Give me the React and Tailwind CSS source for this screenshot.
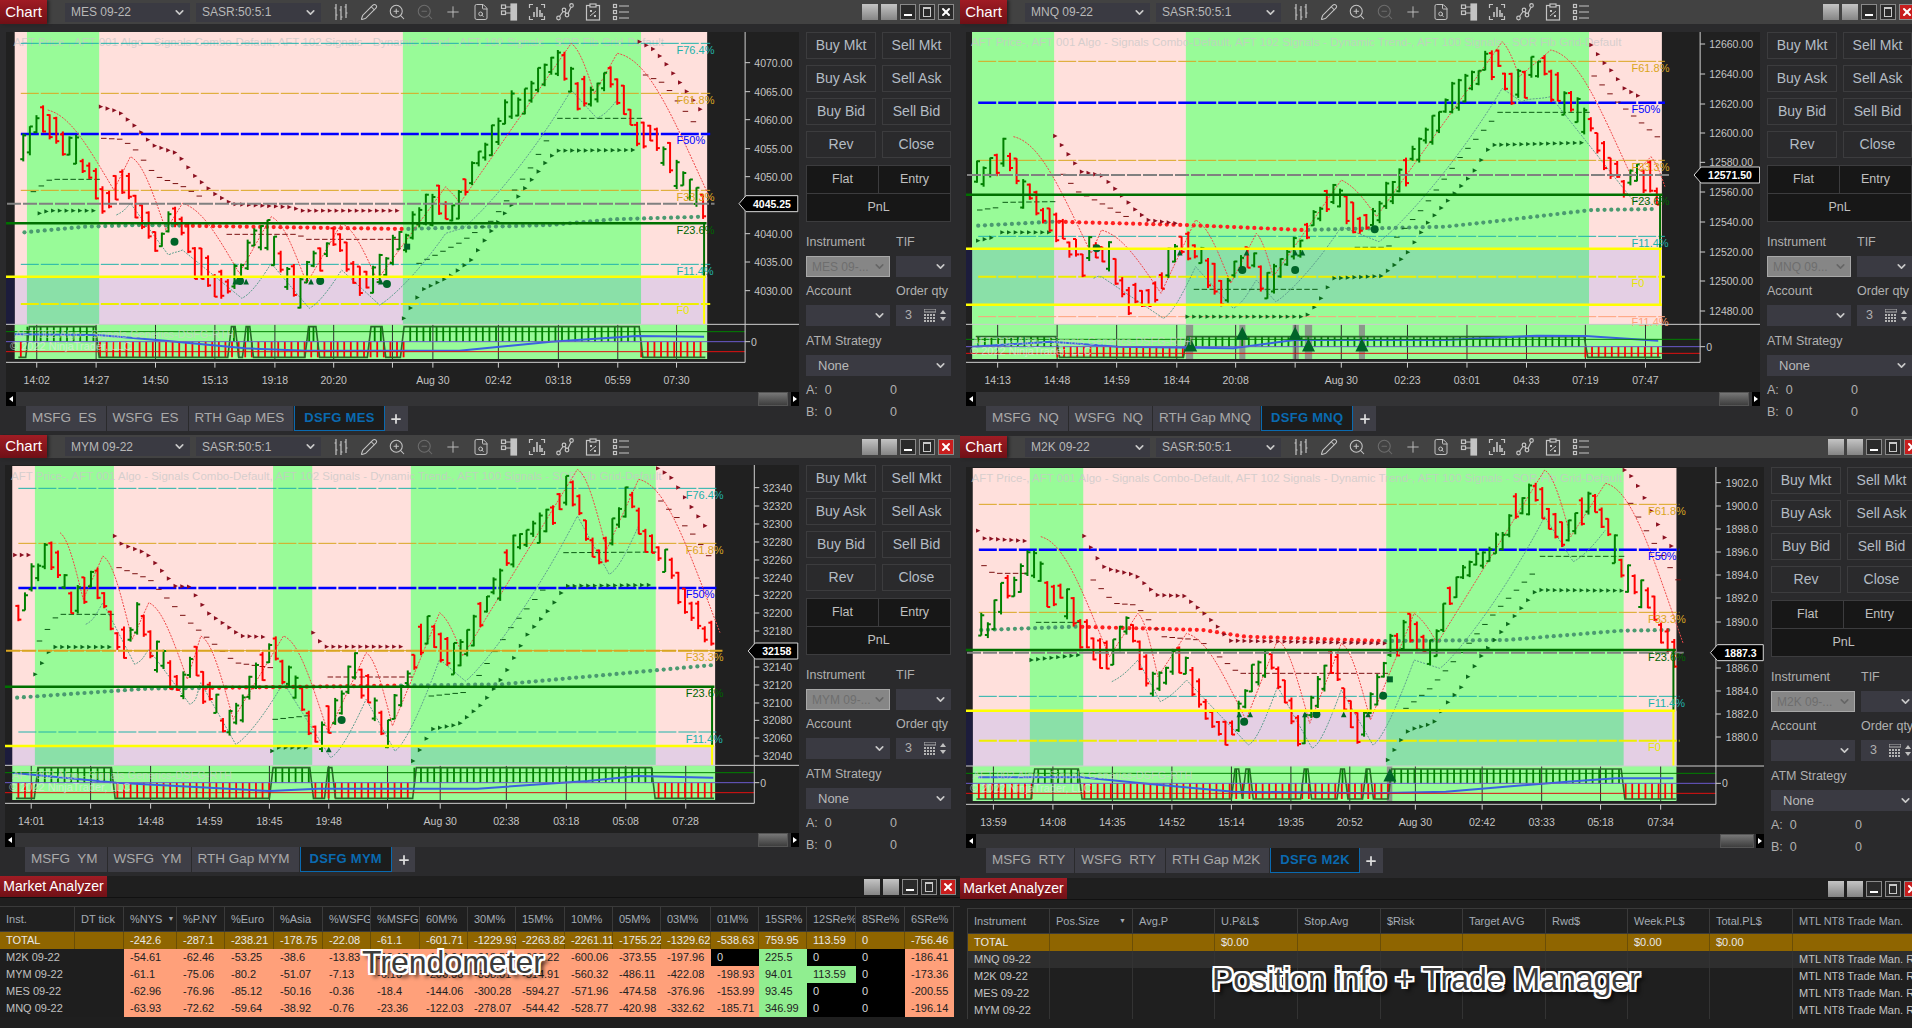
import React from 'react';
import { ChevronDown, ZoomIn, ZoomOut, Plus, Pencil, FileSearch, X } from 'lucide-react';

const CHARTS = {
  mes: {
    inst: 'MES 09-22', short: 'MES 09-...', cx: 0, cy: 0, sx: 1.6333, left: 6, top: 32, w: 793, h: 360,
    wrap: 'h-[434px]', title: 'h-6', gap: 'mt-2', btns: 'mr-[6px]', closeRed: false,
    tabs: ['MSFG  ES', 'WSFG  ES', 'RTH Gap MES', 'DSFG MES'],
    plot: [24, 1155, 95, 973, 1077], axis: 1217, green: [[44, 162], [658, 1047]], overlay: [830, 973],
    fibX: 1105,
    fibs: [[130, 't', 'F76.4%', 150], [280, 'o', 'F61.8%', 300], [402, 'b', 'F50%', 420], [571, 'o', 'F33.3%', 591], [793, 't', 'F11.4%', 813], [912, 'y', 'F0', 930]],
    gray: 611, dg: 670, yellow: 830, edge: 1150,
    prices: [['4070.00', 188], ['4065.00', 275], ['4060.00', 359], ['4055.00', 446], ['4050.00', 530], ['4040.00', 701], ['4035.00', 786], ['4030.00', 872]],
    priceX: 1232, marker: ['4045.25', 611, 1207, 1303],
    times: [[60, '14:02'], [157, '14:27'], [254, '14:50'], [351, '15:13'], [449, '19:18'], [545, '20:20'], [641, ''], [707, 'Aug 30'], [814, '02:42'], [912, '03:18'], [1009, '05:59'], [1105, '07:30']],
    path: [[38, 470], [70, 370], [100, 400], [125, 430], [150, 520], [180, 600], [205, 510], [240, 680], [265, 720], [290, 650], [320, 760], [350, 840], [385, 850], [410, 760], [435, 690], [465, 790], [495, 880], [520, 790], [550, 710], [580, 820], [610, 870], [640, 780], [665, 720], [690, 630], [720, 600], [745, 640], [775, 510], [810, 400], [850, 320], [890, 250], [925, 170], [945, 260], [965, 310], [1000, 200], [1025, 300], [1050, 400], [1090, 450], [1125, 540], [1155, 630]],
    upper: [[[165, 320], [195, 335], [225, 385], [250, 435], [290, 460], [320, 530], [350, 580], [380, 612], [480, 622], [490, 632], [650, 632]], [[1045, 125], [1070, 150], [1090, 195], [1110, 245], [1145, 330]]],
    lower: [[[65, 640], [80, 632], [155, 632]], [[660, 955], [690, 870], [735, 830], [770, 780], [800, 700], [825, 640], [860, 560], [895, 480], [910, 452], [1040, 450]]],
    redDash: [[[165, 415], [195, 418], [215, 445], [250, 528], [295, 560], [330, 598]], [[370, 703], [480, 703], [500, 718], [655, 718]], [[1050, 225], [1080, 250], [1130, 370]]],
    greenDash: [[[50, 575], [78, 538], [160, 538]], [[680, 790], [750, 725], [800, 660], [860, 510], [900, 385]], [[910, 355], [1045, 355]]],
    ma: [[40, 697], [140, 680], [230, 675], [400, 680], [660, 687], [900, 675], [1000, 658], [1150, 650]], maRed: [300, 660],
    circles: [[285, 725], [392, 843], [523, 843], [632, 852]], tris: [[384, 845], [402, 845], [508, 845], [622, 845]], square: [665, 740],
    sub: { lines: [995, 1025, 1055], top: 980, bot: 1072, greens: [[44, 158], [660, 1045]], spikes: [382, 405, 505, 512, 612, 622], blue: [[24, 1003], [160, 1005], [270, 1022], [400, 1045], [500, 1052], [750, 1052], [900, 1025], [1040, 1008], [1150, 1010]], zero: 1025, grid: [] },
    thumb: 'w-[30px] mr-[3px]', seed: 7,
  },
  mnq: {
    inst: 'MNQ 09-22', short: 'MNQ 09...', cx: 960, cy: 0, sx: 1.647, left: 966, top: 32, w: 794, h: 360,
    wrap: 'h-[436px]', title: 'h-6', gap: 'mt-2', btns: 'mr-[-3px]', closeRed: true,
    tabs: ['MSFG  NQ', 'WSFG  NQ', 'RTH Gap MNQ', 'DSFG MNQ'],
    plot: [20, 1156, 95, 973, 1077], axis: 1219, green: [[20, 155], [372, 1036]], overlay: [746, 914],
    fibX: 1106,
    fibs: [[184, 'o', 'F61.8%', 205], [308, 'b', 'F50%', 327], [481, 'o', 'F33.3%', 500], [709, 't', 'F11.4%', 730], [830, 'y', 'F0', 850], [950, 's', 'F11.4%', 966]],
    gray: 525, dg: 584, yellow: 746, yellow2: 914, edge: 1153,
    prices: [['12660.00', 132], ['12640.00', 222], ['12620.00', 312], ['12600.00', 399], ['12580.00', 487], ['12560.00', 576], ['12540.00', 666], ['12520.00', 756], ['12500.00', 843], ['12480.00', 933]],
    priceX: 1234, marker: ['12571.50', 525, 1209, 1317],
    times: [[62, '14:13'], [160, '14:48'], [258, '14:59'], [357, '18:44'], [454, '20:08'], [552, ''], [628, 'Aug 30'], [737, '02:23'], [835, '03:01'], [933, '04:33'], [1030, '07:19'], [1129, '07:47']],
    path: [[28, 530], [60, 490], [80, 450], [100, 540], [120, 600], [150, 640], [180, 720], [210, 790], [225, 730], [250, 770], [280, 880], [325, 910], [345, 800], [380, 700], [400, 770], [440, 880], [465, 780], [480, 740], [510, 860], [550, 780], [585, 680], [620, 580], [650, 640], [680, 680], [720, 570], [760, 450], [800, 340], [840, 260], [885, 165], [915, 260], [950, 220], [965, 190], [990, 280], [1030, 340], [1060, 440], [1100, 560], [1130, 510], [1155, 590]],
    upper: [[[157, 408], [200, 515], [235, 527], [290, 630], [310, 660], [365, 672]], [[1040, 135], [1060, 185], [1075, 215], [1095, 265], [1125, 295]]],
    lower: [[[30, 722], [55, 712]], [[70, 697], [150, 697]], [[375, 950], [570, 950], [590, 910], [615, 835], [695, 828], [735, 765], [770, 670], [810, 590], [845, 520], [875, 435], [1030, 428]]],
    redDash: [[[165, 523], [190, 575], [225, 607], [280, 660]], [[1040, 228], [1075, 300], [1150, 420]]],
    greenDash: [[[28, 630], [60, 622]], [[70, 607], [150, 605]], [[385, 868], [580, 868]], [[650, 742], [700, 742], [760, 620], [820, 470], [880, 345]], [[885, 337], [1035, 337]]],
    ma: [[30, 677], [155, 665], [370, 675], [565, 690], [800, 680], [900, 660], [1040, 630], [1150, 627]], maRed: [155, 565],
    circles: [[225, 745], [465, 810], [552, 810], [683, 688]], tris: [[362, 758], [472, 758], [552, 758], [564, 758]], square: null,
    sub: { lines: [1018, 1040, 1060], top: 1010, bot: 1072, greens: [[20, 158], [370, 1030]], spikes: [], blue: [[20, 1040], [150, 1025], [260, 1040], [450, 1045], [550, 1020], [800, 1020], [950, 1007], [1030, 1008], [1150, 1022]], zero: 1040, grid: [[372, 384], [460, 470], [548, 558], [568, 580], [657, 667]], big: [[380, 1035], [465, 1000], [552, 1000], [574, 1035], [662, 1035]] },
    thumb: 'w-[30px] mr-[3px]', seed: 19,
  },
  mym: {
    inst: 'MYM 09-22', short: 'MYM 09-...', cx: 0, cy: 436, sx: 1.6333, left: 5, top: 465, w: 794, h: 368,
    wrap: 'h-[442px]', title: 'h-[23px] mt-px', gap: 'mt-[7px]', btns: 'mr-[6px]', closeRed: true,
    tabs: ['MSFG  YM', 'WSFG  YM', 'RTH Gap MYM', 'DSFG MYM'],
    plot: [20, 1168, 90, 988, 1092], axis: 1232, green: [[57, 186], [446, 510], [671, 1071]], overlay: [930, 988],
    fibX: 1120,
    fibs: [[157, 't', 'F76.4%', 178], [322, 'o', 'F61.8%', 343], [456, 'b', 'F50%', 474], [644, 'o', 'F33.3%', 663], [888, 't', 'F11.4%', 910]],
    gray: 644, dg: 752, yellow: 930, edge: 1163,
    prices: [['32340', 155], ['32320', 210], ['32300', 264], ['32280', 318], ['32260', 372], ['32240', 426], ['32220', 478], ['32200', 531], ['32180', 585], ['32140', 693], ['32120', 747], ['32100', 801], ['32080', 853], ['32060', 906], ['32040', 960]],
    priceX: 1246, marker: ['32158', 645, 1222, 1303],
    times: [[51, '14:01'], [148, '14:13'], [246, '14:48'], [342, '14:59'], [440, '18:45'], [537, '19:48'], [633, ''], [719, 'Aug 30'], [827, '02:38'], [925, '03:18'], [1022, '05:08'], [1120, '07:28']],
    path: [[30, 560], [60, 430], [90, 330], [110, 420], [130, 520], [160, 400], [180, 530], [210, 640], [235, 540], [265, 670], [300, 760], [320, 640], [345, 780], [375, 880], [410, 770], [455, 640], [480, 740], [530, 920], [560, 800], [590, 690], [610, 790], [635, 900], [670, 720], [710, 570], [750, 690], [770, 590], [800, 500], [830, 400], [860, 290], [900, 240], [935, 140], [950, 220], [985, 370], [1025, 190], [1035, 170], [1060, 300], [1100, 400], [1130, 500], [1170, 620]],
    upper: [[[25, 357], [50, 357]], [[188, 300], [200, 325], [240, 352], [275, 425], [285, 450], [310, 452], [340, 530], [395, 600], [435, 603]], [[512, 590], [530, 632], [665, 632]], [[1075, 97], [1095, 120], [1125, 200], [1160, 290]]],
    lower: [[[58, 715], [80, 648], [90, 633], [180, 633]], [[445, 945], [455, 935], [505, 935]], [[675, 975], [695, 915], [705, 880], [750, 865], [790, 800], [825, 715], [860, 600], [900, 515], [925, 450], [1065, 447]]],
    redDash: [[[190, 395], [240, 430], [300, 550], [380, 680], [445, 697]], [[535, 723], [670, 723]], [[1075, 195], [1130, 300], [1165, 390]]],
    greenDash: [[[60, 615], [90, 535], [185, 535]], [[445, 850], [505, 838]], [[700, 780], [760, 768], [830, 575], [890, 445]], [[920, 350], [1075, 348]]],
    ma: [[28, 785], [240, 758], [820, 745], [1000, 715], [1165, 687]], maRed: [330, 650],
    circles: [[558, 852]], tris: [[537, 940]], square: null,
    sub: { lines: [1010, 1040, 1070], top: 995, bot: 1087, greens: [[57, 186], [446, 510], [675, 1068]], spikes: [537], blue: [[20, 1010], [190, 1040], [440, 1065], [520, 1058], [780, 1058], [960, 1035], [1040, 1020], [1165, 1025]], zero: 1040, grid: [] },
    thumb: 'w-[30px] mr-[3px]', seed: 31,
  },
  m2k: {
    inst: 'M2K 09-22', short: 'M2K 09-...', cx: 960, cy: 440, sx: 1.647, left: 966, top: 467, w: 798, h: 367,
    wrap: 'h-[442px]', title: 'h-[22px]', gap: 'mt-[9px]', btns: 'mr-[-8px]', closeRed: true,
    tabs: ['MSFG  RTY', 'WSFG  RTY', 'RTH Gap M2K', 'DSFG M2K'],
    plot: [21, 1180, 84, 978, 1083], axis: 1245, green: [[115, 203], [702, 1093]], overlay: [812, 978],
    fibX: 1133,
    fibs: [[193, 'o', 'F61.8%', 214], [329, 'b', 'F50%', 349], [517, 'o', 'F33.3%', 538], [769, 't', 'F11.4%', 790], [902, 'y', 'F0', 922]],
    gray: 638, dg: 630, yellow: 812, edge: 1175,
    prices: [['1902.0', 128], ['1900.0', 198], ['1898.0', 267], ['1896.0', 336], ['1894.0', 405], ['1892.0', 474], ['1890.0', 546], ['1886.0', 684], ['1884.0', 753], ['1882.0', 822], ['1880.0', 891]],
    priceX: 1261, marker: ['1887.3', 638, 1236, 1323],
    times: [[55, '13:59'], [153, '14:08'], [251, '14:35'], [349, '14:52'], [447, '15:14'], [545, '19:35'], [642, '20:52'], [750, 'Aug 30'], [860, '02:42'], [958, '03:33'], [1055, '05:18'], [1154, '07:34']],
    path: [[35, 560], [60, 540], [75, 470], [105, 400], [125, 330], [145, 440], [175, 460], [200, 560], [240, 680], [260, 620], [285, 560], [320, 740], [350, 680], [365, 620], [400, 770], [430, 860], [465, 870], [490, 700], [515, 640], [550, 820], [570, 880], [600, 720], [620, 650], [650, 830], [670, 870], [700, 680], [740, 560], [780, 640], [810, 490], [850, 370], [890, 310], [925, 210], [955, 130], [975, 240], [1000, 320], [1030, 190], [1055, 170], [1085, 340], [1120, 440], [1150, 530], [1185, 640]],
    upper: [[[30, 272], [40, 295], [110, 303]], [[205, 288], [225, 350], [240, 385], [290, 405], [310, 440], [325, 465], [370, 468], [400, 515], [425, 560], [445, 602], [700, 610]], [[1095, 90], [1110, 115], [1130, 180], [1160, 290], [1175, 325]]],
    lower: [[[118, 660], [195, 645]], [[705, 960], [725, 905], [740, 870], [780, 850], [800, 795], [825, 745], [858, 650], [910, 537], [950, 450], [1090, 452]]],
    redDash: [[[35, 377], [50, 400], [110, 400]], [[215, 420], [250, 490], [285, 495], [330, 590], [390, 600], [455, 700], [700, 700]], [[1100, 190], [1130, 285], [1180, 425]]],
    greenDash: [[[125, 547], [190, 547]], [[730, 805], [770, 745], [820, 640], [880, 510], [950, 380]], [[955, 349], [1090, 349]]],
    ma: [[35, 570], [190, 560], [400, 570], [470, 590], [700, 603], [900, 600], [1090, 572], [1170, 570]], maRed: [200, 700],
    circles: [[468, 845], [587, 823], [697, 767]], tris: [[460, 823], [478, 823], [568, 823], [632, 823], [672, 823]], square: [708, 718],
    sub: { lines: [1000, 1030, 1060], top: 987, bot: 1077, greens: [[120, 200], [710, 1090]], spikes: [455, 475, 570, 630, 670], blue: [[30, 1012], [200, 1012], [300, 1030], [450, 1055], [680, 1060], [800, 1055], [1000, 1025], [1080, 1015], [1175, 1015]], zero: 1030, grid: [[703, 712]], big: [[708, 1005]] },
    thumb: 'w-[34px] mr-[2px]', seed: 43,
  },
};

const FIB_STYLE = {
  t: { line: '#20b2aa', text: '#20b2aa', width: 1 },
  o: { line: '#daa520', text: '#daa520', width: 1 },
  b: { line: '#0000ff', text: '#0000ff', width: 2.5 },
  y: { line: '#eeee00', text: '#e6e600', width: 2 },
  s: { line: '#ffa07a', text: '#ffa07a', width: 1 },
};

function interp(path, x) {
  if (x <= path[0][0]) return path[0][1];
  for (let i = 1; i < path.length; i++) {
    if (x <= path[i][0]) {
      const t = (x - path[i - 1][0]) / (path[i][0] - path[i - 1][0]);
      return path[i - 1][1] + t * (path[i][1] - path[i - 1][1]);
    }
  }
  return path[path.length - 1][1];
}

function rng(seed) {
  let s = seed;
  return () => {
    s = (s * 16807) % 2147483647;
    return (s % 1000) / 1000;
  };
}

// points every `step` zoom px along a set of polylines
function along(lines, step) {
  const out = [];
  lines.forEach((ln) => {
    for (let x = ln[0][0]; x <= ln[ln.length - 1][0]; x += step) out.push([x, interp(ln, x)]);
  });
  return out;
}

function swingCurves(path, X, Y) {
  const ext = [];
  path.forEach((p, i) => {
    if (i === 0 || i === path.length - 1) return;
    const a = path[i - 1][1];
    const b = path[i + 1][1];
    if (p[1] < a && p[1] < b) ext.push(['hi', p]);
    if (p[1] > a && p[1] > b) ext.push(['lo', p]);
  });
  ext.push(['lo', path[path.length - 1]]);
  let red = '';
  let teal = '';
  for (let i = 0; i < ext.length - 1; i++) {
    const [kind, a] = ext[i];
    const b = ext[i + 1][1];
    if (kind === 'hi') {
      const sx = X(a[0] + 8), sy = Y(a[1] - 40), ex = X(b[0] + 6), ey = Y(b[1] - 30);
      red += `${red ? 'L' : 'M'}${sx} ${sy} C${sx + (ex - sx) * 0.35} ${sy + 6},${sx + (ex - sx) * 0.6} ${sy + (ey - sy) * 0.45},${ex} ${ey} `;
    } else {
      const sx = X(a[0] + 10), sy = Y(a[1] + 45), ex = X(b[0] + 8), ey = Y(b[1] + 100);
      teal += `${teal ? 'L' : 'M'}${sx} ${sy} C${sx + 8} ${sy - 4},${sx + (ex - sx) * 0.55} ${sy + (ey - sy) * 0.4},${ex} ${ey} `;
    }
  }
  return { red, teal };
}

function PriceChart({ c }) {
  const X = (z) => c.cx + z / c.sx;
  const Y = (z) => c.cy + z / 3;
  const [x0, x1, top, mid, bot] = c.plot;
  const r = rng(c.seed);
  const step = 6.6 * c.sx;
  const bars = [];
  const start = c.path[0][0];
  const end = c.path[c.path.length - 1][0];
  for (let x = start; x <= end; x += step) {
    const y0 = interp(c.path, x);
    const y1 = interp(c.path, x + step);
    const flip = r() < 0.16;
    const up = flip ? y1 >= y0 : y1 < y0;
    const span = 42 + r() * 56;
    const centre = (y0 + y1) / 2 + (r() - 0.5) * 48;
    const hi = centre - span / 2;
    const lo = centre + span / 2;
    const o = up ? lo - r() * 10 : hi + r() * 10;
    const cl = up ? hi + r() * 10 : lo - r() * 10;
    bars.push({ x: X(x), o: Y(o), c: Y(cl), hi: Y(hi), lo: Y(lo), col: up ? '#008000' : '#ff0000' });
  }
  const curves = swingCurves(c.path, X, Y);
  const isGreen = (z) => c.sub.greens.some(([a, b]) => z >= a && z <= b);
  const subBars = [];
  for (let x = x0 + 10; x <= x1; x += step) subBars.push([x, isGreen(x)]);
  c.sub.spikes.forEach((x) => subBars.push([x, true]));
  let ribbon = '';
  let prev = null;
  for (let x = x0 + 6; x <= x1; x += 6) {
    const g = isGreen(x) || c.sub.spikes.some((s) => Math.abs(s - x) < 7);
    const y = g ? c.sub.top : c.sub.bot;
    ribbon += `${prev === null ? 'M' : 'L'}${X(x)} ${Y(y)} `;
    prev = y;
  }
  const left = c.left;
  const right = c.left + c.w;
  const pts = (arr) => arr.map(([a, b]) => `${X(a)},${Y(b)}`).join(' ');
  const tri = (x, y, s = 2.2) => `${x - s},${y - s} ${x + s},${y} ${x - s},${y + s}`;
  const up = (x, y, s) => `${x - s},${y + s} ${x},${y - s} ${x + s},${y + s}`;

  return (
    <svg width={c.w} height={c.h} viewBox={`${left} ${c.top} ${c.w} ${c.h}`} className="block shrink-0 bg-[#202020]">
      {/* session background */}
      <rect x={X(x0)} y={Y(top)} width={X(x1) - X(x0)} height={Y(mid) - Y(top)} fill="#ffe0dc" />
      {c.green.map(([a, b]) => (
        <rect key={a} x={X(a)} y={Y(top)} width={X(b) - X(a)} height={Y(mid) - Y(top)} fill="#98fb98" />
      ))}
      <rect x={X(x0)} y={Y(c.overlay[0])} width={X(x1) - X(x0)} height={Y(c.overlay[1]) - Y(c.overlay[0])} fill="#e4cfe4" />
      {c.green.map(([a, b]) => (
        <rect key={a} x={X(a)} y={Y(c.overlay[0])} width={X(b) - X(a)} height={Y(c.overlay[1]) - Y(c.overlay[0])} fill="#8ae0a8" />
      ))}
      <rect x={left} y={Y(c.overlay[0])} width={X(x0) - left} height={Y(c.overlay[1]) - Y(c.overlay[0])} fill="#1c1c3c" />
      <rect x={X(x0)} y={Y(mid)} width={X(x1) - X(x0)} height={Y(bot) - Y(mid)} fill="#98fb98" />

      <text x={X(x0 - 2)} y={Y(top + 42)} fontSize="11.5" fill="#c8c8c8" fillOpacity="0.75">AFT Price-,  AFT 001 Algo - Signals Combo-Default,  AFT 102 Signals - Dynamic Trend-,  AFT 100 Signals - SOR Fib Grid-Default</text>

      {/* fib levels */}
      {c.fibs.map(([y, k]) => (
        <line key={y} x1={X(x0 + 10)} x2={X(x1 + 5)} y1={Y(y)} y2={Y(y)} stroke={FIB_STYLE[k].line} strokeWidth={FIB_STYLE[k].width} strokeDasharray="18 2" />
      ))}

      {/* moving average dots */}
      {along([c.ma], 11 * c.sx / 1.6333).map(([x, y]) => (
        <circle key={x} cx={X(x)} cy={Y(y)} r="2.1" fill={x >= c.maRed[0] && x <= c.maRed[1] ? '#ff2020' : '#4a9a70'} />
      ))}

      {/* stop markers */}
      {along(c.upper, 11).map(([x, y]) => <polygon key={`u${x}`} points={tri(X(x), Y(y))} fill="#8b1020" />)}
      {along(c.lower, 11).map(([x, y]) => <polygon key={`l${x}`} points={tri(X(x), Y(y))} fill="#0c6a1c" />)}
      {along(c.redDash, 13).map(([x, y]) => <line key={`r${x}`} x1={X(x)} x2={X(x) + 5.5} y1={Y(y)} y2={Y(y)} stroke="#7a1010" strokeWidth="1" />)}
      {along(c.greenDash, 13).map(([x, y]) => <line key={`g${x}`} x1={X(x)} x2={X(x) + 5.5} y1={Y(y)} y2={Y(y)} stroke="#0a5a14" strokeWidth="1" />)}

      <path d={curves.teal} fill="none" stroke="#5f9f8f" strokeWidth="1" strokeDasharray="2 1.2" />
      <path d={curves.red} fill="none" stroke="#f04848" strokeWidth="1" strokeDasharray="2 1.2" />

      {/* ohlc bars */}
      {bars.map((b) => (
        <g key={b.x} stroke={b.col} strokeWidth="2" fill="none">
          <line x1={b.x} x2={b.x} y1={b.hi} y2={b.lo} />
          <line x1={b.x - 3} x2={b.x} y1={b.o} y2={b.o} />
          <line x1={b.x} x2={b.x + 3} y1={b.c} y2={b.c} />
        </g>
      ))}

      {c.circles.map(([x, y]) => <circle key={x} cx={X(x)} cy={Y(y)} r="4" fill="#006428" />)}
      {c.tris.map(([x, y]) => <polygon key={x} points={up(X(x), Y(y), 2.8)} fill="#006428" />)}
      {c.square && <rect x={X(c.square[0]) - 3} y={Y(c.square[1]) - 3} width="6" height="6" fill="#006428" />}

      {/* heavy levels */}
      <line x1={left + 1} x2={X(x1 + 12)} y1={Y(c.gray)} y2={Y(c.gray)} stroke={c === CHARTS.mym ? '#daa520' : '#808080'} strokeWidth="2" strokeDasharray="14 2" />
      <line x1={left} x2={X(c.edge + 4)} y1={Y(c.dg)} y2={Y(c.dg)} stroke="#007000" strokeWidth="2.5" />
      <line x1={X(c.edge)} x2={X(c.edge)} y1={Y(c.dg)} y2={Y(c.yellow)} stroke="#007000" strokeWidth="2" />
      <line x1={left} x2={X(c.edge + 3)} y1={Y(c.yellow)} y2={Y(c.yellow)} stroke="#ffff00" strokeWidth="2.5" />
      {c.yellow2 && <line x1={left} x2={X(c.edge + 3)} y1={Y(c.yellow2)} y2={Y(c.yellow2)} stroke="#ffff00" strokeWidth="2.5" />}
      <line x1={X(c.edge)} x2={X(c.edge)} y1={Y(c.yellow)} y2={Y(c.yellow2 || mid)} stroke="#ffff00" strokeWidth="2" />

      {c.fibs.map(([y, k, label, ly]) => (
        <text key={label + y} x={X(c.fibX)} y={Y(ly) + 4} fontSize="11" fill={FIB_STYLE[k].text}>{label}</text>
      ))}
      <text x={X(c.fibX)} y={Y(c.dg + 20) + 4} fontSize="11" fill="#006400">F23.6%</text>

      {/* indicator pane */}
      {c.sub.grid.map(([a, b]) => <rect key={a} x={X(a)} y={Y(mid)} width={X(b) - X(a)} height={Y(bot) - Y(mid)} fill="#8a9a8a" />)}
      {c.times.map(([x]) => <line key={x} x1={X(x)} x2={X(x)} y1={Y(mid)} y2={Y(bot)} stroke="#303030" strokeWidth="1" />)}
      {subBars.map(([x, g]) => (
        g
          ? <line key={x} x1={X(x)} x2={X(x)} y1={Y(c.sub.top)} y2={Y(c.sub.zero)} stroke="#008000" strokeWidth="1.8" />
          : <line key={x} x1={X(x)} x2={X(x)} y1={Y(c.sub.zero)} y2={Y(c.sub.bot)} stroke="#ff0000" strokeWidth="1.8" />
      ))}
      <path d={ribbon} fill="none" stroke="#2a6a2a" strokeWidth="1.6" />
      <polyline points={pts(c.sub.blue)} fill="none" stroke="#3a62e0" strokeWidth="2" />
      <line x1={left} x2={X(c.axis)} y1={Y(c.sub.lines[0])} y2={Y(c.sub.lines[0])} stroke="#008000" strokeWidth="1" />
      <line x1={left} x2={X(c.axis)} y1={Y(c.sub.lines[1])} y2={Y(c.sub.lines[1])} stroke="#6a5acd" strokeWidth="1" />
      <line x1={left} x2={X(c.axis)} y1={Y(c.sub.lines[2])} y2={Y(c.sub.lines[2])} stroke="#e01010" strokeWidth="1" />
      {(c.sub.big || []).map(([x, y]) => <polygon key={x} points={up(X(x), Y(y), 6.5)} fill="#006428" />)}
      <text x={X(x0)} y={Y(c.sub.lines[0] + 18)} fontSize="11" fill="#d0d0d0" fillOpacity="0.65">AFT 002 Algo - Signals Generics-DSFG-RTH</text>
      <text x={left + 4} y={Y(c.sub.lines[1] + 25)} fontSize="11" fill="#e8e8e8" fillOpacity="0.65">© 2022 NinjaTrader, LLC</text>

      {/* axes */}
      <line x1={left} x2={right} y1={Y(mid)} y2={Y(mid)} stroke="#cfcfcf" strokeWidth="1" />
      <line x1={left} x2={X(c.axis)} y1={Y(bot + 10)} y2={Y(bot + 10)} stroke="#cfcfcf" strokeWidth="1" />
      <line x1={X(c.axis)} x2={X(c.axis)} y1={c.top} y2={Y(bot + 10)} stroke="#cfcfcf" strokeWidth="1" />
      {c.prices.map(([label, y]) => (
        <g key={label}>
          <line x1={X(c.axis)} x2={X(c.axis) + 5} y1={Y(y)} y2={Y(y)} stroke="#cfcfcf" />
          <text x={X(c.priceX)} y={Y(y) + 4} fontSize="10.5" fill="#c4c4c4">{label}</text>
        </g>
      ))}
      <line x1={X(c.axis)} x2={X(c.axis) + 5} y1={Y(c.sub.zero)} y2={Y(c.sub.zero)} stroke="#cfcfcf" />
      <text x={X(c.axis) + 6} y={Y(c.sub.zero) + 4} fontSize="10.5" fill="#c4c4c4">0</text>
      {c.times.map(([x, t]) => (
        <g key={x}>
          <line x1={X(x)} x2={X(x)} y1={Y(bot + 10)} y2={Y(bot + 26)} stroke="#cfcfcf" />
          <text x={X(x)} y={Y(bot + 63) + 4} fontSize="10.5" fill="#c4c4c4" textAnchor="middle">{t}</text>
        </g>
      ))}
      <polygon
        points={`${X(c.marker[2])},${Y(c.marker[1])} ${X(c.marker[2]) + 7},${Y(c.marker[1]) - 8} ${X(c.marker[3])},${Y(c.marker[1]) - 8} ${X(c.marker[3])},${Y(c.marker[1]) + 8} ${X(c.marker[2]) + 7},${Y(c.marker[1]) + 8}`}
        fill="#000"
        stroke="#d8d8d8"
        strokeWidth="1"
      />
      <text x={X(c.marker[2]) + 14} y={Y(c.marker[1]) + 4} fontSize="10.5" fontWeight="700" fill="#fff">{c.marker[0]}</text>
    </svg>
  );
}

function BarsIcon() {
  return (
    <svg width="18" height="18" viewBox="0 0 18 18" fill="none" stroke="#c4c4c4" strokeWidth="1.2">
      <path d="M4 1v16M2.5 5H4M4 12h1.5M9 3v14M7.5 7H9M9 14h1.5M14 1v14M12.5 4H14M14 10h1.5" />
    </svg>
  );
}
function PanelIcon() {
  return (
    <svg width="18" height="18" viewBox="0 0 18 18" fill="none" stroke="#c4c4c4" strokeWidth="1.2">
      <rect x="1.5" y="2" width="4" height="3.5" />
      <rect x="1.5" y="8" width="4" height="3.5" />
      <path d="M5.5 4H11M5.5 10H11" />
      <rect x="11" y="1" width="5.5" height="16" fill="#c4c4c4" />
    </svg>
  );
}
function ChartFrameIcon() {
  return (
    <svg width="18" height="18" viewBox="0 0 18 18" fill="none" stroke="#c4c4c4" strokeWidth="1.2">
      <path d="M5 1.5H1.5V5M13 1.5h3.5V5M5 16.5H1.5V13M13 16.5h3.5V13" />
      <path d="M6 14V9M9 14V4M12 14V7M14 14v-4" strokeWidth="1.6" />
    </svg>
  );
}
function NodesIcon() {
  return (
    <svg width="18" height="18" viewBox="0 0 18 18" fill="none" stroke="#c4c4c4" strokeWidth="1.2">
      <circle cx="2.5" cy="15" r="1.8" />
      <circle cx="8" cy="7" r="1.8" />
      <circle cx="11" cy="12" r="1.8" />
      <circle cx="15.5" cy="2.5" r="1.8" />
      <path d="M3.5 13.5L7 8.5M9 8.7l1.2 1.7M12 10.4L15 4.2" />
    </svg>
  );
}
function ClipIcon() {
  return (
    <svg width="18" height="18" viewBox="0 0 18 18" fill="none" stroke="#c4c4c4" strokeWidth="1.2">
      <rect x="2.5" y="2.5" width="13" height="14.5" />
      <rect x="6" y="1" width="6" height="3" fill="#424242" />
      <path d="M6 7l2 2M8 7L6 9M10 12l2 2M12 12l-2 2M6 13l6-5" strokeWidth="1" />
    </svg>
  );
}
function ListIcon() {
  return (
    <svg width="18" height="18" viewBox="0 0 18 18" fill="none" stroke="#c4c4c4" strokeWidth="1.2">
      <rect x="1.5" y="1.5" width="3" height="3" />
      <rect x="1.5" y="7.5" width="3" height="3" />
      <rect x="1.5" y="13.5" width="3" height="3" />
      <path d="M7 3h10M7 9h10M7 15h10" />
    </svg>
  );
}

function CalcIcon() {
  return (
    <svg width="12" height="14" viewBox="0 0 12 14" fill="#b4b4b4">
      <rect x="0" y="0" width="12" height="3" fill="none" stroke="#b4b4b4" />
      <path d="M0 5h2v2H0zM3 5h2v2H3zM6 5h2v2H6zM9 5h2v2H9zM0 8h2v2H0zM3 8h2v2H3zM6 8h2v2H6zM9 8h2v2H9zM0 11h2v2H0zM3 11h2v2H3zM6 11h2v2H6zM9 11h2v2H9z" />
    </svg>
  );
}

function WinButtons({ red, className }) {
  return (
    <div className={`flex shrink-0 gap-[3px] ${className}`}>
      <span className="h-4 w-4 bg-gradient-to-b from-[#c4c4c4] to-[#858585]" />
      <span className="h-4 w-4 bg-gradient-to-b from-[#c4c4c4] to-[#858585]" />
      <span className="flex h-4 w-4 items-end justify-center border border-[#8a8a8a] bg-[#2a2a2a] pb-[3px]">
        <span className="h-[2px] w-2 bg-white" />
      </span>
      <span className="flex h-4 w-4 items-center justify-center border border-[#8a8a8a] bg-[#2a2a2a]">
        <span className="h-[10px] w-2 border border-[#c8c8c8] border-t-2" />
      </span>
      <span className={red ? 'flex h-4 w-4 items-center justify-center border border-[#8a8a8a] bg-[#c81e1e]' : 'flex h-4 w-4 items-center justify-center border border-[#8a8a8a] bg-[#2a2a2a]'}>
        <X size={12} strokeWidth={4} color="#fff" />
      </span>
    </div>
  );
}

function Select({ label, className }) {
  return (
    <div className={`flex items-center justify-between bg-[#3a3a42] text-[#b8b8b8] ${className}`}>
      <span>{label}</span>
      <ChevronDown size={13} strokeWidth={3} color="#c8c8c8" />
    </div>
  );
}

function TitleBar({ c }) {
  return (
    <div className={`flex shrink-0 items-center bg-[#424242] ${c.title}`}>
      <div className="flex h-full w-[47px] items-center justify-center bg-gradient-to-b from-[#a01c24] to-[#701016] text-[15px] text-white shadow-[2px_0_3px_#222]">Chart</div>
      <Select label={c.inst} className="ml-[18px] h-[19px] w-[125px] pl-[6px] pr-[4px] text-[12px]" />
      <Select label="SASR:50:5:1" className="ml-[6px] h-[19px] w-[125px] pl-[6px] pr-[4px] text-[12px]" />
      <div className="ml-[11px] flex items-center gap-[10px] text-[#c4c4c4]">
        <BarsIcon />
        <Pencil size={18} strokeWidth={1.4} />
        <ZoomIn size={18} strokeWidth={1.4} />
        <ZoomOut size={18} strokeWidth={1.4} color="#6c6c6c" />
        <Plus size={18} strokeWidth={1.2} />
        <FileSearch size={18} strokeWidth={1.3} />
        <PanelIcon />
        <ChartFrameIcon />
        <NodesIcon />
        <ClipIcon />
        <ListIcon />
      </div>
      <WinButtons red={c.closeRed} className={`ml-auto ${c.btns}`} />
    </div>
  );
}

function TradeBtn({ children }) {
  return <div className="flex h-[27px] items-center justify-center border border-[#3c3c3e] text-[14px] text-[#b4bcc4]">{children}</div>;
}

function OrderPanel({ c }) {
  return (
    <div className="w-[145px] shrink-0 text-[12.5px] text-[#b0b0b0]">
      <div className="grid grid-cols-[70px_69px] gap-x-[6px] gap-y-[6px]">
        {['Buy Mkt', 'Sell Mkt', 'Buy Ask', 'Sell Ask', 'Buy Bid', 'Sell Bid', 'Rev', 'Close'].map((t) => <TradeBtn key={t}>{t}</TradeBtn>)}
      </div>
      <div className="mt-[7px] border border-[#3c3c3e] bg-[#171717] text-[12.5px] text-[#c0c0c0]">
        <div className="flex h-[28px] border-b border-[#3c3c3e]">
          <div className="flex w-[72px] items-center justify-center border-r border-[#3c3c3e]">Flat</div>
          <div className="flex flex-1 items-center justify-center">Entry</div>
        </div>
        <div className="flex h-[27px] items-center justify-center">PnL</div>
      </div>
      <div className="mt-[13px] grid grid-cols-[84px_55px] gap-x-[6px]">
        <span className="leading-[15px]">Instrument</span>
        <span className="leading-[15px]">TIF</span>
        <div className="mt-[6px] flex h-[21px] items-center justify-between overflow-hidden whitespace-nowrap border border-[#a8a8a8] bg-[#868686] pl-[5px] pr-[3px] text-[12px] text-[#6e6e6e]">
          <span>{c.short}</span>
          <ChevronDown size={13} strokeWidth={3} color="#666" className="shrink-0" />
        </div>
        <Select className="mt-[6px] h-[21px] justify-end pr-[4px]" />
        <span className="mt-[7px] leading-[15px]">Account</span>
        <span className="mt-[7px] leading-[15px]">Order qty</span>
        <Select className="mt-[6px] h-[21px] justify-end pr-[4px]" />
        <div className="mt-[6px] flex h-[21px] items-center bg-[#3a3a42] pl-[9px] pr-[4px]">
          <span>3</span>
          <span className="ml-[12px]"><CalcIcon /></span>
          <span className="ml-[4px] flex flex-col gap-[3px]">
            <span className="h-0 w-0 border-x-[3px] border-b-[4px] border-x-transparent border-b-[#c0c0c0]" />
            <span className="h-0 w-0 border-x-[3px] border-t-[4px] border-x-transparent border-t-[#c0c0c0]" />
          </span>
        </div>
      </div>
      <div className="mt-[8px] leading-[15px]">ATM Strategy</div>
      <Select label="None" className="mt-[6px] h-[21px] pl-[12px] pr-[4px] text-[13px]" />
      <div className="mt-[7px] grid grid-cols-[84px_1fr] leading-[15px]">
        <span>A:&nbsp; 0</span>
        <span>0</span>
        <span className="mt-[7px]">B:&nbsp; 0</span>
        <span className="mt-[7px]">0</span>
      </div>
    </div>
  );
}

function ScrollBar({ c }) {
  return (
    <div className="flex h-[14px] items-stretch bg-[#333335]">
      <span className="flex w-[10px] items-center justify-center bg-black">
        <span className="h-0 w-0 border-y-[3px] border-r-[4px] border-y-transparent border-r-white" />
      </span>
      <span className={`ml-auto bg-gradient-to-b from-[#777] to-[#3e3e3e] border border-[#555] ${c.thumb}`} />
      <span className="flex w-[8px] items-center justify-center bg-black">
        <span className="h-0 w-0 border-y-[3px] border-l-[4px] border-y-transparent border-l-white" />
      </span>
    </div>
  );
}

function ChartTabs({ tabs }) {
  return (
    <div className="flex h-[25px] items-stretch pl-5 text-[13.5px] text-[#aaaaaa]">
      {tabs.slice(0, 3).map((t) => (
        <div key={t} className="mr-px flex items-center whitespace-pre bg-[#3e3e46] pl-[6px] pr-[9px]">{t}</div>
      ))}
      <div className="flex items-center border-x border-b border-[#0a6ab0] bg-[#1c1c1c] px-[9px] text-[13px] font-bold tracking-[0.3px] text-[#0a6ab0]">{tabs[3]}</div>
      <div className="flex w-[23px] items-center justify-center bg-[#3e3e46] text-white"><Plus size={14} strokeWidth={3} color="#ddd" /></div>
    </div>
  );
}

function ChartWindow({ id }) {
  const c = CHARTS[id];
  return (
    <div className={`flex flex-col overflow-hidden bg-[#2a2a2c] ${c.wrap}`}>
      <TitleBar c={c} />
      <div className={`flex ${c.gap}`}>
        <div className={`flex shrink-0 flex-col ${id === 'mym' ? 'ml-[5px]' : 'ml-[6px]'}`}>
          <PriceChart c={c} />
          <ScrollBar c={c} />
          <ChartTabs tabs={c.tabs} />
        </div>
        <div className="ml-[7px]">
          <OrderPanel c={c} />
        </div>
      </div>
    </div>
  );
}

const TREND_COLS = ['Inst.', 'DT tick', '%NYS', '%P.NY', '%Euro', '%Asia', '%WSFG', '%MSFG', '60M%', '30M%', '15M%', '10M%', '05M%', '03M%', '01M%', '15SR%', '12SRe%', '8SRe%', '6SRe%'];
const TREND_TOTAL = ['TOTAL', '', '-242.6', '-287.1', '-238.21', '-178.75', '-22.08', '-61.1', '-601.71', '-1229.93', '-2263.82', '-2261.11', '-1755.22', '-1329.62', '-538.63', '759.95', '113.59', '0', '-756.46'];
const TREND_ROWS = [
  ['M2K 09-22', '', '-54.61', '-62.46', '-53.25', '-38.6', '-13.83', '-13.17', '-129.24', '-313.57', '-608.22', '-600.06', '-373.55', '-197.96', '0', '225.5', '0', '0', '-186.41'],
  ['MYM 09-22', '', '-61.1', '-75.06', '-80.2', '-51.07', '-7.13', '-6.18', '-206.38', '-338.01', '-514.91', '-560.32', '-486.11', '-422.08', '-198.93', '94.01', '113.59', '0', '-173.36'],
  ['MES 09-22', '', '-62.96', '-76.96', '-85.12', '-50.16', '-0.36', '-18.4', '-144.06', '-300.28', '-594.27', '-571.96', '-474.58', '-376.96', '-153.99', '93.45', '0', '0', '-200.55'],
  ['MNQ 09-22', '', '-63.93', '-72.62', '-59.64', '-38.92', '-0.76', '-23.36', '-122.03', '-278.07', '-544.42', '-528.77', '-420.98', '-332.62', '-185.71', '346.99', '0', '0', '-196.14'],
];

function trendCell(v, col) {
  if (col < 2) return 'bg-[#1e1e1e] text-[#c0c0c0]';
  if (v === '0') return 'bg-black text-[#d8d8d8]';
  if (col === 15 || col === 16) return 'bg-[#90ee90] text-[#222]';
  return 'bg-[#ffa07a] text-[#222]';
}

function AnalyzerBar({ red }) {
  return (
    <div className="flex h-[22px] items-center border-b border-[#111]">
      <div className="flex h-full w-[107px] items-center justify-center bg-gradient-to-b from-[#a01c24] to-[#701016] text-[14px] text-white">Market Analyzer</div>
      <WinButtons red className={red} />
    </div>
  );
}

const overlayText = 'pointer-events-none absolute whitespace-nowrap text-[32px] text-[#3c3c3c] [text-shadow:2px_0_0_#fff,-2px_0_0_#fff,0_2px_0_#fff,0_-2px_0_#fff,2px_2px_0_#fff,-2px_2px_0_#fff,2px_-2px_0_#fff,-2px_-2px_0_#fff,4px_4px_4px_#000]';

function Trendometer() {
  return (
    <div className="relative h-[152px] overflow-hidden bg-[#1f1f1f] text-[11px]">
      <AnalyzerBar red="ml-auto mr-[4px]" />
      <div className="mt-[8px] border-t border-[#3a3a3a]">
        <div className="grid grid-cols-[75px_49px_53px_48px_49px_49px_48px_49px_48px_48px_49px_48px_48px_50px_48px_48px_49px_49px_49px]">
          {TREND_COLS.map((h, i) => (
            <div key={h} className="flex h-[25px] items-center overflow-hidden whitespace-nowrap border-r border-b border-[#3a3a3a] pl-[6px] text-[#a4acb4]">
              {h}{i === 2 && <span className="ml-[5px] text-[7px]">▼</span>}
            </div>
          ))}
          {TREND_TOTAL.map((v, i) => (
            <div key={i} className="flex h-[17px] items-center border-r border-[#6b4e06] bg-[#8f6500] pl-[6px] text-[#e8e8e8]">{v}</div>
          ))}
          {TREND_ROWS.map((row) => row.map((v, i) => (
            <div key={row[0] + i} className={`flex h-[17px] items-center pl-[6px] ${trendCell(v, i)}`}>{v}</div>
          )))}
        </div>
      </div>
      <div className={`${overlayText} left-[362px] top-[62px]`}>Trendometer</div>
    </div>
  );
}

const POS_COLS = ['Instrument', 'Pos.Size', 'Avg.P', 'U.P&L$', 'Stop.Avg', '$Risk', 'Target AVG', 'Rwd$', 'Week.PL$', 'Total.PL$', 'MTL NT8 Trade Man.'];
const POS_ROWS = ['MNQ 09-22', 'M2K 09-22', 'MES 09-22', 'MYM 09-22'];

function PositionInfo() {
  return (
    <div className="relative h-[150px] overflow-hidden bg-[#1f1f1f] text-[11px]">
      <AnalyzerBar red="ml-auto mr-[-8px]" />
      <div className="ml-[7px] mt-[8px] border-t border-l border-[#3a3a3a]">
        <div className="grid grid-cols-[82px_83px_82px_83px_83px_82px_83px_82px_82px_83px_120px]">
          {POS_COLS.map((h, i) => (
            <div key={h} className="flex h-[25px] items-center justify-between whitespace-nowrap border-r border-b border-[#3a3a3a] px-[6px] text-[#a4acb4]">
              <span>{h}</span>{i === 1 && <span className="text-[7px]">▼</span>}
            </div>
          ))}
          {POS_COLS.map((h, i) => (
            <div key={h} className="flex h-[17px] items-center border-r border-[#6b4e06] bg-[#8f6500] px-[6px] text-[#e8e8e8]">
              {i === 0 ? 'TOTAL' : i === 3 || i === 8 || i === 9 ? '$0.00' : ''}
            </div>
          ))}
          {POS_ROWS.map((r, ri) => POS_COLS.map((h, i) => (
            <div key={r + h} className={`flex h-[17px] items-center overflow-hidden whitespace-nowrap border-r border-[#333] px-[6px] text-[#c4c4c4] ${ri === 0 ? 'bg-[#2e2e2e]' : 'bg-[#1f1f1f]'}`}>
              {i === 0 ? r : i === 10 ? 'MTL NT8 Trade Man. R' : ''}
            </div>
          )))}
        </div>
      </div>
      <div className={`${overlayText} left-[252px] top-[77px]`}>Position info + Trade Manager</div>
    </div>
  );
}

export default function App() {
  return (
    <div className="flex h-[1028px] w-[1912px] overflow-hidden bg-[#1a1a1a] font-['Liberation_Sans',Arial,sans-serif]">
      <div className="w-[960px] shrink-0">
        <ChartWindow id="mes" />
        <ChartWindow id="mym" />
        <Trendometer />
      </div>
      <div className="w-[952px] shrink-0">
        <ChartWindow id="mnq" />
        <ChartWindow id="m2k" />
        <PositionInfo />
      </div>
    </div>
  );
}
